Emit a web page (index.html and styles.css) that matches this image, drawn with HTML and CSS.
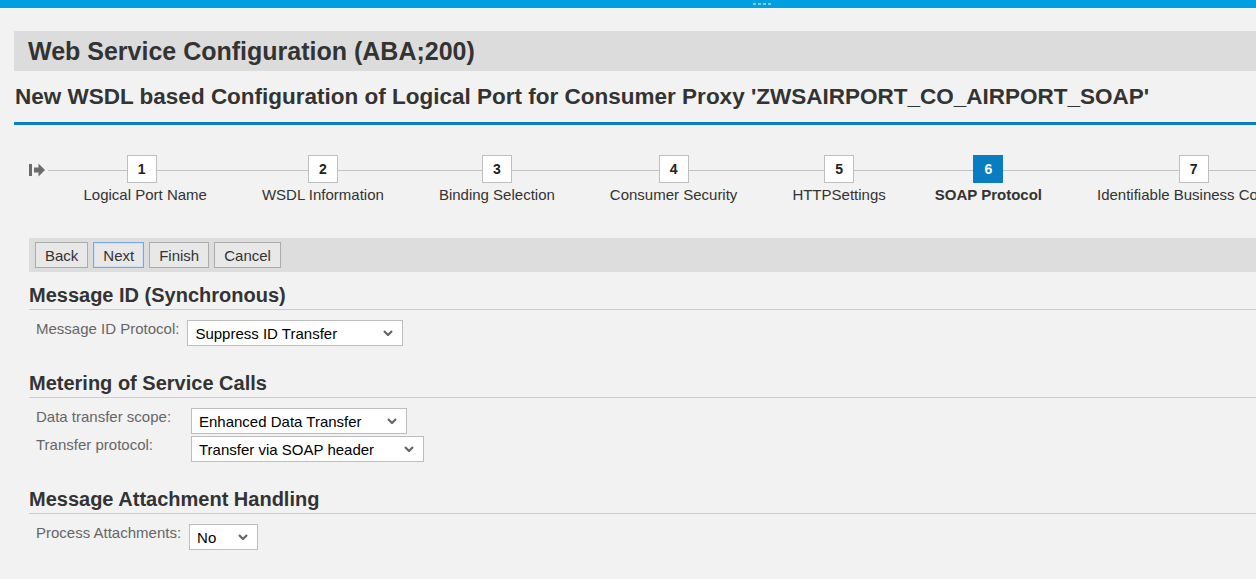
FILE: index.html
```html
<!DOCTYPE html>
<html lang="en">
<head>
    <meta charset="UTF-8">
    <title>Web Service Configuration (ABA;200)</title>
    <link rel="stylesheet" href="styles.css">
</head>
<body>
    <div class="topbar">
        <div class="grip"><span></span><span></span><span></span><span></span></div>
    </div>

    <div class="page-header">
        <div class="title-bar">Web Service Configuration (ABA;200)</div>
        <div class="subtitle">New WSDL based Configuration of Logical Port for Consumer Proxy 'ZWSAIRPORT_CO_AIRPORT_SOAP'</div>
    </div>

    <div class="content">
        <!-- roadmap -->
        <div class="roadmap">
            <svg class="roadmap-start" width="16" height="14" viewBox="0 0 16 14">
                <rect x="0" y="1" width="3" height="12" fill="#6b6b6b"/>
                <path d="M5 4.5 H9.5 V0.5 L16 7 L9.5 13.5 V9.5 H5 Z" fill="#6b6b6b"/>
            </svg>
            <div class="steps">
                <div class="step"><div class="step-num">1</div><div class="step-label">Logical Port Name</div></div>
                <div class="step"><div class="step-num">2</div><div class="step-label">WSDL Information</div></div>
                <div class="step"><div class="step-num">3</div><div class="step-label">Binding Selection</div></div>
                <div class="step"><div class="step-num">4</div><div class="step-label">Consumer Security</div></div>
                <div class="step"><div class="step-num">5</div><div class="step-label">HTTPSettings</div></div>
                <div class="step active"><div class="step-num">6</div><div class="step-label">SOAP Protocol</div></div>
                <div class="step"><div class="step-num">7</div><div class="step-label">Identifiable Business Context</div></div>
            </div>
        </div>

        <!-- toolbar -->
        <div class="toolbar">
            <button class="btn">Back</button>
            <button class="btn focused">Next</button>
            <button class="btn">Finish</button>
            <button class="btn">Cancel</button>
        </div>

        <div class="section first">
            <h3 class="section-title">Message ID (Synchronous)</h3>
            <div class="form-grid">
                <div class="field-label">Message ID Protocol:</div>
                <div class="select w-216">
                    <span>Suppress ID Transfer</span>
                    <svg class="chevron" width="10" height="6" viewBox="0 0 10 6"><polyline points="1,1 5,5 9,1" fill="none" stroke="#666" stroke-width="2.2"/></svg>
                </div>
            </div>
        </div>

        <div class="section">
            <h3 class="section-title">Metering of Service Calls</h3>
            <div class="form-grid metering">
                <div class="field-label">Data transfer scope:</div>
                <div class="select w-216">
                    <span>Enhanced Data Transfer</span>
                    <svg class="chevron" width="10" height="6" viewBox="0 0 10 6"><polyline points="1,1 5,5 9,1" fill="none" stroke="#666" stroke-width="2.2"/></svg>
                </div>
                <div class="field-label">Transfer protocol:</div>
                <div class="select w-233">
                    <span>Transfer via SOAP header</span>
                    <svg class="chevron" width="10" height="6" viewBox="0 0 10 6"><polyline points="1,1 5,5 9,1" fill="none" stroke="#666" stroke-width="2.2"/></svg>
                </div>
            </div>
        </div>

        <div class="section">
            <h3 class="section-title">Message Attachment Handling</h3>
            <div class="form-grid">
                <div class="field-label">Process Attachments:</div>
                <div class="select w-69">
                    <span>No</span>
                    <svg class="chevron" width="10" height="6" viewBox="0 0 10 6"><polyline points="1,1 5,5 9,1" fill="none" stroke="#666" stroke-width="2.2"/></svg>
                </div>
            </div>
        </div>
    </div>
</body>
</html>
```

FILE: styles.css
```css
html, body {
    margin: 0;
    padding: 0;
    overflow: hidden;
}
body {
    font-family: "Liberation Sans", Arial, sans-serif;
    background-color: #f2f2f2;
    color: #333;
    height: 579px;
}
.topbar {
    height: 8px;
    background-color: #009fe0;
}
.grip {
    display: flex;
    gap: 2px;
    padding: 3px 0 0 753px;
}
.grip span {
    width: 3px;
    height: 2px;
    background-color: #7fcdf0;
}
.page-header {
    margin-top: 23px;
    padding-left: 14px;
}
.title-bar {
    height: 40px;
    line-height: 40px;
    padding-left: 14px;
    background-color: #dcdcdc;
    font-size: 25px;
    font-weight: bold;
    white-space: nowrap;
}
.subtitle {
    padding: 13px 0 12px 1px;
    line-height: 26px;
    font-size: 22.5px;
    font-weight: bold;
    white-space: nowrap;
    border-bottom: 3px solid #0a7ec4;
}
.content {
    padding-left: 29px;
}
.roadmap {
    display: flex;
    align-items: flex-start;
    padding-top: 30px;
    overflow: hidden;
    background: linear-gradient(#c3c3c3, #c3c3c3) no-repeat 19px 45px / 100% 1px;
}
.roadmap-start {
    margin-top: 8px;
    flex-shrink: 0;
}
.steps {
    display: flex;
    margin-left: 11px;
}
.step {
    display: flex;
    flex-direction: column;
    align-items: center;
    padding: 0 27.5px;
    flex-shrink: 0;
}
.step:first-child .step-num {
    margin-right: 7px;
}
.step-num {
    width: 28px;
    height: 26px;
    line-height: 26px;
    text-align: center;
    background-color: #fff;
    border: 1px solid #bfbfbf;
    font-size: 14px;
    font-weight: bold;
    color: #222;
}
.step-label {
    margin-top: 3px;
    font-size: 15px;
    line-height: 17px;
    white-space: nowrap;
}
.step.active {
    padding-left: 21.5px;
}
.step.active .step-num {
    background-color: #0a7cc1;
    border-color: #0a7cc1;
    color: #fff;
}
.step.active .step-label {
    font-weight: bold;
}
.toolbar {
    display: flex;
    gap: 5px;
    margin-top: 35px;
    padding: 4px 6px;
    height: 26px;
    background-color: #dddddd;
}
.btn {
    height: 26px;
    padding: 0 9px;
    font-family: inherit;
    font-size: 15px;
    color: #333;
    background-color: #e8e8e8;
    border: 1px solid #ababab;
    border-radius: 0;
}
.btn.focused {
    border-color: #79a8e0;
    box-shadow: inset 0 0 0 1px #cfe0f5;
}
.section {
    margin-top: 25px;
}
.section.first {
    margin-top: 11px;
}
.section-title {
    margin: 0;
    padding-bottom: 2px;
    font-size: 20px;
    line-height: 24px;
    font-weight: bold;
    border-bottom: 1px solid #cdcdcd;
}
.form-grid {
    display: grid;
    grid-template-columns: max-content max-content;
    column-gap: 8px;
    row-gap: 2px;
    margin-top: 10px;
    padding-left: 7px;
}
.form-grid.metering {
    grid-template-columns: 147px max-content;
}
.field-label {
    font-size: 15px;
    line-height: 18px;
    color: #666;
}
.select {
    display: flex;
    align-items: center;
    justify-content: space-between;
    box-sizing: border-box;
    height: 26px;
    padding: 0 9px 0 7px;
    background-color: #fff;
    border: 1px solid #bdbdbd;
    font-size: 15px;
    color: #000;
}
.w-216 { width: 216px; }
.w-233 { width: 233px; }
.w-69 { width: 69px; }
.chevron {
    flex-shrink: 0;
}
```
